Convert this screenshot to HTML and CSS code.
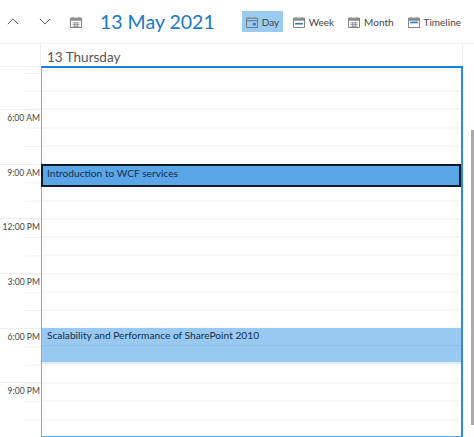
FILE: index.html
```html
<!DOCTYPE html>
<html lang="en">
<head>
<meta charset="utf-8">
<title>Scheduler</title>
<link rel="stylesheet" href="styles.css">
</head>
<body>
<div class="app">
  <header class="toolbar">
    <div class="nav">
      <svg class="chev" viewBox="0 0 14 8"><path d="M1 7 7 1l6 6"/></svg>
      <svg class="chev" viewBox="0 0 14 8"><path d="M1 1l6 6 6-6"/></svg>
      <svg class="cal" viewBox="0 0 14 14"><path class="band" d="M1 3h12v2.500H1z"/><path class="frame" d="M.5 2.500h13v11H.5z"/><path class="ticks" d="M3.500 1v2M10.500 1v2M3 8h8M3 10h8M3 12h8M5.500 7v6M8.500 7v6"/></svg>
      <span class="title">13 May 2021</span>
    </div>
    <nav class="views">
      <span class="view active"><svg class="cal" viewBox="0 0 14 14"><path class="frame" d="M.5 2.500h13v11H.5z"/><path class="frame" d="M.5 5.500h13"/><path class="ticks" d="M3.500 1v2M10.500 1v2"/><path class="fill" d="M8 8h3.500v3H8z"/></svg>Day</span>
      <span class="view"><svg class="cal" viewBox="0 0 14 14"><path class="band" d="M1 3h12v2.500H1z"/><path class="frame" d="M.5 2.500h13v11H.5z"/><path class="ticks" d="M3.500 1v2M10.500 1v2"/><path class="fill" d="M2.500 8h9v2h-9z"/></svg>Week</span>
      <span class="view"><svg class="cal" viewBox="0 0 14 14"><path class="band" d="M1 3h12v2.500H1z"/><path class="frame" d="M.5 2.500h13v11H.5z"/><path class="ticks" d="M3.500 1v2M10.500 1v2M3 8h8M3 10h8M3 12h8M5.500 7v6M8.500 7v6"/></svg>Month</span>
      <span class="view"><svg class="cal" viewBox="0 0 14 14"><path class="band" d="M1 3h12v2.500H1z"/><path class="frame" d="M.5 2.500h13v11H.5z"/><path class="ticks" d="M3.500 1v2M10.500 1v2"/><path class="fill" d="M2.500 6.500h9v2h-9z"/></svg>Timeline</span>
    </nav>
  </header>
  <div class="dayhead"><div class="gutter-top"></div><div class="daytitle">13 Thursday</div></div>
  <main class="body">
    <div class="hours">
      <div class="hour short"></div>
      <div class="hour"><span>6:00 AM</span></div>
      <div class="hour"><span>9:00 AM</span></div>
      <div class="hour"><span>12:00 PM</span></div>
      <div class="hour"><span>3:00 PM</span></div>
      <div class="hour"><span>6:00 PM</span></div>
      <div class="hour"><span>9:00 PM</span></div>
    </div>
    <div class="grid">
      <div class="event selected">Introduction to WCF services</div>
      <div class="event light">Scalability and Performance of SharePoint 2010</div>
    </div>
    <div class="scrollbar"></div>
  </main>
</div>
</body>
</html>
```
FILE: styles.css
```css
* { box-sizing: border-box; }
html, body { margin: 0; padding: 0; background: #fff; }
body { font-family: Lato, Roboto, sans-serif; color: #333; }
.app { width: 474px; height: 437px; display: flex; flex-direction: column; overflow: hidden; }
.toolbar { height: 44px; flex: none; display: flex; align-items: center; justify-content: space-between; border-bottom: 1px solid #f0f0f0; padding: 0 13px 0 7px; }
.nav { display: flex; align-items: center; }
.chev { width: 12px; height: 7px; fill: none; stroke: #555; stroke-width: 1.1; margin-right: 20px; }
.chev + .chev { margin-right: 19px; }
.cal { width: 12px; height: 12px; flex: none; }
.frame { fill: none; stroke: #666; stroke-width: 1; }
.band { fill: #888; }
.ticks { fill: none; stroke: #777; stroke-width: .8; }
.fill { fill: #2b7cd3; }
.title { font-size: 19.500px; color: #1a78c8; margin-left: 18px; line-height: 24px; }
.views { display: flex; align-items: center; gap: 10px; }
.view { display: flex; align-items: center; gap: 4px; height: 21px; font-size: 10px; color: #444; }
.view.active { background: #9ccbf2; padding: 0 4px; width: 41px; }
.view + .view + .view { margin-left: 4px; }
.dayhead { height: 22px; flex: none; display: flex; }
.gutter-top { width: 41px; flex: none; border-right: 1px solid #eee; }
.daytitle { flex: none; width: 422px; font-size: 13.500px; line-height: 26px; padding-left: 6px; color: #555; border-right: 1px solid #eee; height: 22px; }
.body { flex: 1; display: flex; position: relative; }
.hours { width: 41px; flex: none; border-top: 1px solid #eee; background-image: linear-gradient(#f0f0f0 1px, transparent 1px); background-size: 16px 18.240px; background-position: right 0 top 6px; background-repeat: repeat-y; }
.hour { height: 54.700px; border-bottom: 1px solid #eee; font-size: 8.600px; text-align: right; color: #444; line-height: 16px; padding-right: 1px; white-space: nowrap; }
.hour span { display: block; }
.hour.short { height: 43px; }
.grid { width: 422px; flex: none; position: relative; border-style: solid; border-width: 2px 2px 2px 1.500px; border-color: #1a7fd8 #2f8ad8 #5aa5e0 #6db0e8; background-image: repeating-linear-gradient(to bottom, transparent 0, transparent 17.240px, #eee 17.240px, #eee 18.240px); background-position: 0 5.500px; }
.event { position: absolute; left: -1px; right: 0; font-size: 10.200px; line-height: 14px; color: #12304f; padding-left: 6px; }
.event.selected { top: 96px; height: 23px; background: #5ba6e6; border: 2px solid #111827; padding-left: 4px; }
.event.light { top: 260px; height: 34px; background: linear-gradient(to bottom, #99c9f0 0, #99c9f0 17px, #8fbfe6 17px, #8fbfe6 18px, #99c9f0 18px); box-shadow: 0 2px 0 #dceefb; left: 0; padding-left: 5px; }
.scrollbar { position: absolute; right: 0; top: 64px; width: 3px; height: 295px; background: #ababab; }
```
